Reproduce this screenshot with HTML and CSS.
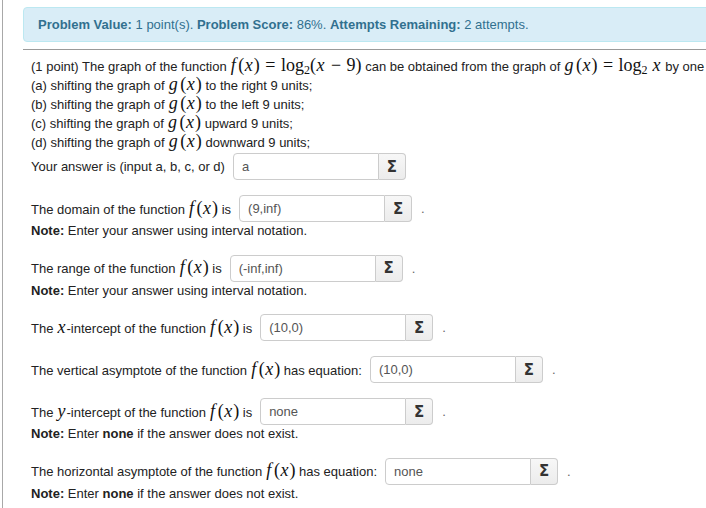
FILE: index.html
```html
<!DOCTYPE html>
<html lang="en">
<head>
  <meta charset="UTF-8">
  <meta name="viewport" content="width=device-width, initial-scale=1.0">
  <title>Problem 4</title>
  <link rel="stylesheet" href="styles.css">
</head>
<body>
  <div class="page">
    <div class="alert">
      <b>Problem Value:</b> 1 point(s). <b>Problem Score:</b> 86%. <b>Attempts Remaining:</b> 2 attempts.
    </div>
    <hr class="rule">
    <div class="problem">
      <p class="lead">(1 point) The graph of the function <span class="m"><i class="fn">f</i>(<i>x</i>) <span class="op">=</span> log<sub>2</sub>(<i>x</i> <span class="op">−</span> 9)</span> can be obtained from the graph of <span class="m"><i class="fn">g</i>(<i>x</i>) <span class="op">=</span> log<sub>2</sub> <i>x</i></span> by one of the following operations:</p>
      <p>(a) shifting the graph of <span class="m"><i class="fn">g</i>(<i>x</i>)</span> to the right 9 units;</p>
      <p>(b) shifting the graph of <span class="m"><i class="fn">g</i>(<i>x</i>)</span> to the left 9 units;</p>
      <p>(c) shifting the graph of <span class="m"><i class="fn">g</i>(<i>x</i>)</span> upward 9 units;</p>
      <p>(d) shifting the graph of <span class="m"><i class="fn">g</i>(<i>x</i>)</span> downward 9 units;</p>

      <div class="item tight">
        <div class="row">
          <span class="label">Your answer is (input a, b, c, or d)</span>
          <span class="ans"><input class="field" value="a" readonly><button class="sigma">Σ</button></span>
        </div>
      </div>

      <div class="item">
        <div class="row">
          <span class="label">The domain of the function <span class="m"><i class="fn">f</i>(<i>x</i>)</span> is</span>
          <span class="ans"><input class="field" value="(9,inf)" readonly><button class="sigma">Σ</button></span>
          <span class="dot">.</span>
        </div>
        <p class="note"><b>Note:</b> Enter your answer using interval notation.</p>
      </div>

      <div class="item">
        <div class="row">
          <span class="label">The range of the function <span class="m"><i class="fn">f</i>(<i>x</i>)</span> is</span>
          <span class="ans"><input class="field" value="(-inf,inf)" readonly><button class="sigma">Σ</button></span>
          <span class="dot">.</span>
        </div>
        <p class="note"><b>Note:</b> Enter your answer using interval notation.</p>
      </div>

      <div class="item">
        <div class="row">
          <span class="label">The <span class="m"><i>x</i></span>-intercept of the function <span class="m"><i class="fn">f</i>(<i>x</i>)</span> is</span>
          <span class="ans"><input class="field" value="(10,0)" readonly><button class="sigma">Σ</button></span>
          <span class="dot">.</span>
        </div>
      </div>

      <div class="item">
        <div class="row">
          <span class="label">The vertical asymptote of the function <span class="m"><i class="fn">f</i>(<i>x</i>)</span> has equation:</span>
          <span class="ans"><input class="field" value="(10,0)" readonly><button class="sigma">Σ</button></span>
          <span class="dot">.</span>
        </div>
      </div>

      <div class="item">
        <div class="row">
          <span class="label">The <span class="m"><i>y</i></span>-intercept of the function <span class="m"><i class="fn">f</i>(<i>x</i>)</span> is</span>
          <span class="ans"><input class="field" value="none" readonly><button class="sigma">Σ</button></span>
          <span class="dot">.</span>
        </div>
        <p class="note"><b>Note:</b> Enter <b>none</b> if the answer does not exist.</p>
      </div>

      <div class="item">
        <div class="row">
          <span class="label">The horizontal asymptote of the function <span class="m"><i class="fn">f</i>(<i>x</i>)</span> has equation:</span>
          <span class="ans"><input class="field" value="none" readonly><button class="sigma">Σ</button></span>
          <span class="dot">.</span>
        </div>
        <p class="note"><b>Note:</b> Enter <b>none</b> if the answer does not exist.</p>
      </div>
    </div>
  </div>
</body>
</html>
```

FILE: styles.css
```css
html, body {
  margin: 0;
  padding: 0;
  overflow: hidden;
  background-color: #fff;
}
body {
  font-family: "Liberation Sans", Arial, sans-serif;
  font-size: 13px;
  color: #222;
}
.page {
  width: 760px;
  min-height: 508px;
  margin-left: 2px;
  border-left: 1px solid #a8a8a8;
  padding: 7px 0 0 20px;
}
.alert {
  background-color: #d9edf7;
  border: 1px solid #bce8f1;
  border-radius: 4px;
  color: #31708f;
  padding: 7px 14px;
  line-height: 19px;
}
.rule {
  margin: 7px 0 0 0;
  border: none;
  border-top: 1px solid #9a9a9a;
  height: 0;
}
.problem {
  padding: 7px 0 0 8px;
}
.problem p {
  margin: 0;
  line-height: 19px;
}
.problem p.note {
  line-height: 17.5px;
}
.lead {
  white-space: nowrap;
}
.m {
  font-family: "Liberation Serif", "Times New Roman", serif;
  font-size: 18px;
  line-height: 14px;
  color: #111;
}
.m i {
  font-style: italic;
  padding: 0 1px 0 0.5px;
}
.m i.fn {
  padding-right: 2.5px;
}
.m .op {
  padding: 0 1px;
}
.m sub {
  font-size: 12px;
  vertical-align: -3px;
  line-height: 0;
}
.item {
  margin-top: 15px;
}
.item.tight {
  margin-top: 1px;
}
.row {
  display: flex;
  align-items: center;
  height: 27px;
}
.label {
  white-space: nowrap;
}
.ans {
  display: flex;
  margin-left: 8px;
}
.field {
  box-sizing: border-box;
  width: 146px;
  height: 27px;
  margin: 0;
  padding: 0 8px;
  border: 1px solid #ccc;
  border-radius: 4px 0 0 4px;
  font-family: "Liberation Sans", Arial, sans-serif;
  font-size: 13px;
  color: #555;
  background: #fff;
  outline: none;
}
.sigma {
  box-sizing: border-box;
  width: 27px;
  height: 27px;
  margin: 0;
  padding: 0;
  border: 1px solid #ccc;
  border-left: none;
  border-radius: 0 4px 4px 0;
  background: linear-gradient(#f7f7f7, #ececec);
  font-family: "DejaVu Sans", sans-serif;
  font-weight: bold;
  font-size: 15px;
  color: #333;
}
.dot {
  margin-left: 9px;
  color: #666;
}
```
